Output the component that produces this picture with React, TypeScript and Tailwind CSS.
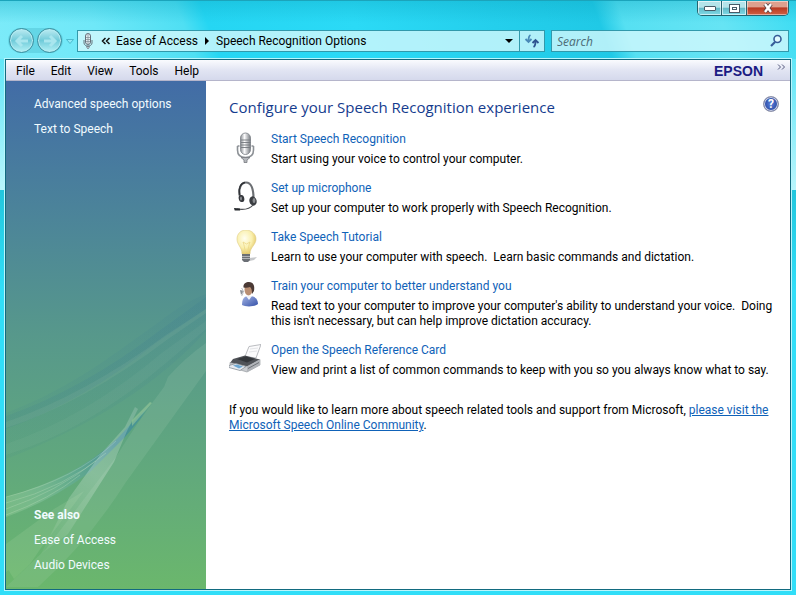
import type { ReactNode } from 'react';

function Microphone() {
  return (
    <svg viewBox="0 0 32 32" className="h-8 w-8" aria-hidden="true">
      <defs>
        <linearGradient id="mic" x1="0" x2="1">
          <stop offset="0" stopColor="#8b8f94" />
          <stop offset="0.4" stopColor="#fbfbfc" />
          <stop offset="1" stopColor="#767a80" />
        </linearGradient>
      </defs>
      <path d="M8.500 14h2M24.500 14h-2M8.500 14v4c0 5 3 7.500 8 7.500s8-2.500 8-7.500v-4" fill="none" stroke="#8d9196" strokeWidth="1.600" />
      <rect x="11.500" y="1" width="10" height="21.500" rx="5" fill="url(#mic)" stroke="#85898e" strokeWidth="0.900" />
      <path d="M12 8h9.500M12 10.500h9.500M12 13h9.500M12 15.500h9.500" stroke="#74787e" strokeWidth="0.900" />
      <path d="M12 25.500h9l-3 2.500v2.500h-3v-2.500z" fill="#b5b8bc" stroke="#777a80" strokeWidth="0.800" />
    </svg>
  );
}

function SmallMicrophone() {
  return (
    <svg viewBox="0 0 16 16" className="h-4 w-4" aria-hidden="true">
      <path d="M4 7v3c0 2 2 3 4 3s4-1 4-3V7" fill="none" stroke="#66767f" />
      <rect x="5.500" y="0.500" width="5" height="11" rx="2.500" fill="#e4eef2" stroke="#66707b" />
      <path d="M6 4.500h4M6 6.500h4M6 8.500h4M8 1v10" stroke="#7f8b94" strokeWidth="0.700" />
      <path d="M6.500 13.500h3L8.500 15.500h-1z" fill="#dfe9ee" stroke="#66707b" strokeWidth="0.800" />
    </svg>
  );
}

function Headset() {
  return (
    <svg viewBox="0 0 32 32" className="h-8 w-8" aria-hidden="true">
      <path d="M11.500 17C8.500 8 12 1.500 17 1.500c5.500 0 7.500 7 7.500 16" fill="none" stroke="#6d7074" strokeWidth="2.200" />
      <path d="M10.500 14C9 7 12 2 16 1.500" fill="none" stroke="#2f3236" strokeWidth="1.400" />
      <ellipse cx="12.500" cy="17.500" rx="2.800" ry="3.600" transform="rotate(-12 12.500 17.500)" fill="#34373c" />
      <ellipse cx="12" cy="17.500" rx="0.900" ry="2" fill="#8f9296" />
      <ellipse cx="24" cy="20" rx="3.600" ry="4.700" transform="rotate(-15 24 20)" fill="#3b3e42" />
      <ellipse cx="25" cy="19.500" rx="1.400" ry="2.600" fill="#8b8e92" />
      <path d="M24 24c-3 4-9 5-16 4" fill="none" stroke="#4b4e52" strokeWidth="1.200" />
      <path d="M5 27l6 .5.200 2-5.500 0z" fill="#25282c" />
    </svg>
  );
}

function Bulb() {
  return (
    <svg viewBox="0 0 32 32" className="h-8 w-8" aria-hidden="true">
      <defs>
        <radialGradient id="bulb" cx="0.400" cy="0.350" r="0.650">
          <stop offset="0" stopColor="#fffef0" />
          <stop offset="0.600" stopColor="#faf0ae" />
          <stop offset="1" stopColor="#e3c768" />
        </radialGradient>
      </defs>
      <path d="M20 28l8-1-3 3-9 2z" fill="#c5c7ca" />
      <path d="M17 0c-5.500 0-9 4-9 9 0 6 5 8 5 15h8c0-7 6-9 6-15 0-5-4.500-9-10-9z" fill="url(#bulb)" stroke="#dfcd86" strokeWidth="0.600" />
      <path d="M16 23c0-5-1-8-2-11l3.500 2 3.500-2c-1 3-2 6-2 11" fill="none" stroke="#ecd788" strokeWidth="0.800" />
      <path d="M13 24h8v6l-2 2h-4l-2-2z" fill="#6b6f75" />
      <path d="M13 26.500h8M13 28.500h8" stroke="#c1c4c8" strokeWidth="0.800" />
    </svg>
  );
}

function Speaker() {
  return (
    <svg viewBox="0 0 32 32" className="h-8 w-8" aria-hidden="true">
      <defs>
        <linearGradient id="shirt" x2="1" y2="1">
          <stop stopColor="#a5b5e4" />
          <stop offset="1" stopColor="#3350a8" />
        </linearGradient>
      </defs>
      <path d="M13 26c0-6 2-9 7-9 6 0 9 3 9 8-3 3-13 3-16 1z" fill="url(#shirt)" />
      <path d="M17 17l3 4 3-4z" fill="#f1f4fb" />
      <ellipse cx="19.500" cy="10.500" rx="4" ry="6" fill="#b98e72" />
      <path d="M14.500 8.500c-.5-4 2.500-5.500 5.500-5.500 4.500 0 6 4 5 9l-2 3c0-4-.5-6-2-7-2 .8-4 1-6.500.5z" fill="#4b3a35" />
      <path d="M11 11l4 1-3 4z" fill="#8b8f96" />
      <path d="M12.500 9c2 2 2 6 0 8" fill="none" stroke="#b5b8bd" strokeWidth="1" />
    </svg>
  );
}

function Printer() {
  return (
    <svg viewBox="0 0 32 32" className="h-8 w-8" aria-hidden="true">
      <path d="M16 13.500l4-10 12-2-5 13.500z" fill="#fbfbfc" stroke="#a8abb0" strokeWidth="0.800" />
      <path d="M21 6l8-1M20 9l8-1" stroke="#d8dade" strokeWidth="0.700" />
      <path d="M4 16l12-3.500 15 4-12 7-18-3.500z" fill="#505358" />
      <path d="M8 16l9-2.500 9 2.500-8 3.500z" fill="#34373b" />
      <path d="M1 19.500l17 4 13-7v5.500l-13 7-17-5z" fill="#c9ccd0" stroke="#8c9095" strokeWidth="0.600" />
      <path d="M18 23.500l13-7v5.500l-13 7z" fill="#b1b4b9" />
      <path d="M19 25.500l11-6" stroke="#6e7277" strokeWidth="1" />
      <path d="M0 22.500l7-2 10 3-6 4-11-3z" fill="#e6ebf1" stroke="#81868c" strokeWidth="0.700" />
      <path d="M4 22.500l4-1 6 2-4 2z" fill="#6fa8d2" />
    </svg>
  );
}

function Task({ icon, title, children }: { icon: ReactNode; title: string; children: ReactNode }) {
  return (
    <li className="flex items-start gap-[10px]">
      <span className="shrink-0">{icon}</span>
      <div className="flex flex-col items-start gap-[5px]">
        <a href="#task" className="text-[#0f62b8]">{title}</a>
        <p>{children}</p>
      </div>
    </li>
  );
}

function SidebarArt() {
  return (
    <svg viewBox="0 0 200 300" preserveAspectRatio="none" className="absolute bottom-0 left-0 h-[300px] w-full" aria-hidden="true">
      <defs>
        <linearGradient id="blade" gradientUnits="userSpaceOnUse" x1="0" y1="215" x2="146" y2="114">
          <stop offset="0" stopColor="#a5d8a8" stopOpacity="0.300" />
          <stop offset="0.350" stopColor="#68af95" stopOpacity="0.700" />
          <stop offset="0.700" stopColor="#458f96" />
          <stop offset="0.900" stopColor="#4a9693" />
          <stop offset="1" stopColor="#6bae8e" stopOpacity="0.400" />
        </linearGradient>
        <linearGradient id="band" x1="0" y1="1" x2="1" y2="0">
          <stop offset="0" stopColor="#3f7e91" stopOpacity="0.140" />
          <stop offset="1" stopColor="#3f7e91" stopOpacity="0.240" />
        </linearGradient>
        <linearGradient id="ray" gradientUnits="userSpaceOnUse" x1="35" y1="265" x2="130" y2="118">
          <stop offset="0" stopColor="#fff" stopOpacity="0.040" />
          <stop offset="0.550" stopColor="#fff" stopOpacity="0.240" />
          <stop offset="1" stopColor="#fff" stopOpacity="0.160" />
        </linearGradient>
      </defs>
      <path d="M0 124C70 97 110 63 153 33Q180 12 200 5V42Q130 120 0 170z" fill="url(#band)" opacity="0.600" />
      <path d="M0 127Q77 100 153 42L200 8V20L150 54Q80 111 0 140z" fill="url(#band)" />
      <path d="M0 133Q80 105 160 46L200 20V24L162 50Q78 114 0 139z" fill="#a2c9b0" opacity="0.120" />
      <path d="M0 155Q80 128 157 63L200 32v8L160 74Q80 142 0 166z" fill="#a2c9b0" opacity="0.080" />
      <path d="M200 54Q180 68 162 88L158 98Q130 135 110 168L40 260 0 298H32Q82 253 120 193L200 82z" fill="#b4d4bb" opacity="0.150" />
      <path d="M0 208Q84 184 122 138L145 114Q140 124 119 148L84 183Q45 212 0 228z" fill="url(#blade)" />
      <path d="M0 208Q70 190 110 152M0 214Q60 198 100 164M0 220Q50 203 90 172M0 226Q44 210 74 186" fill="none" stroke="#d3eacc" strokeOpacity="0.250" strokeWidth="1" />
      <path d="M129 118l3 2-11 22-3 7-10 24-46 72-27 20 28-56 31-43 25-28z" fill="url(#ray)" />
      <path d="M126 131l18-18 2 1-20 23z" fill="#a6d19e" opacity="0.500" />
      <path d="M0 255L48 220 78 202 42 250 0 283zM0 277l48-37-24 35-16 15z" fill="#d5edc2" opacity="0.120" />
    </svg>
  );
}

const caption = 'flex h-[14px] items-center justify-center border-r border-[#25636f] shadow-[inset_0_0_0_1px_#ffffff99]';
const glass = 'bg-linear-to-b from-[#b4e4ea] from-45% via-[#62b9c6] via-50% to-[#7fdbe8]';
const round = 'flex h-[25px] w-[25px] items-center justify-center rounded-full border border-[#3a8e9e] bg-linear-to-b from-[#bcebf2] via-[#6fcbd9] to-[#b4f2f7] text-[#a9e6ee] shadow-[inset_0_0_0_1px_#b5ecf2]';

export default function App() {
  return (
    <div className="flex min-h-screen flex-col bg-[linear-gradient(180deg,#62e6f7_0,#62e6f7_60px,#b9f5fc_190px,#22c6dd_190px,#31def8_290px,#31def8_100%)] px-[5px] pb-[5px] font-[Roboto,'Open_Sans',sans-serif] text-[12px] leading-[15px] text-black">
      <header className="-mx-[5px] border-t border-[#1ba4bb] bg-[linear-gradient(180deg,#0aa5c055_0,#0aa5c000_22px),linear-gradient(70deg,#7cebf9_0%,#6fe8f8_13%,#4fdff3_24%,#25d6f3_27%,#2bdaf6_45%,#24cfec_62%,#20c9e6_75%,#56e0f2_78%,#66e4f4_90%,#3bdcf3_100%)] px-[5px]">
        <div className="flex h-[29px] items-start justify-end pr-[2px]">
          <div className="flex overflow-hidden rounded-b-[5px] border border-t-0 border-[#25636f]">
            <button aria-label="Minimize" className={`${caption} ${glass} w-[24px]`}>
              <span className="h-[5px] w-3 rounded-[1px] border border-[#485b67] bg-white" />
            </button>
            <button aria-label="Maximize" className={`${caption} ${glass} w-[25px]`}>
              <span className="flex h-[9px] w-[11px] items-center justify-center border border-[#485b67] bg-white">
                <span className="h-[3px] w-[5px] border border-[#485b67]" />
              </span>
            </button>
            <button aria-label="Close" className="flex h-[14px] w-[41px] items-center justify-center bg-linear-to-b from-[#dda08e] from-40% via-[#b83a22] via-50% to-[#cf6044] shadow-[inset_0_0_0_1px_#ffffff77]">
              <svg viewBox="0 0 12 10" className="h-[10px] w-3" aria-hidden="true">
                <path d="M3 1l6 8M9 1L3 9" stroke="#5b4548" strokeWidth="4" />
                <path d="M3 1l6 8M9 1L3 9" stroke="#fff" strokeWidth="2.400" />
              </svg>
            </button>
          </div>
        </div>
        <nav aria-label="Navigation" className="flex h-[29px] items-start pr-[2px] pl-[3px]">
          <div className="-mt-[2px] flex items-center gap-[3px] rounded-full bg-[#49b8ca66] px-px">
            <button aria-label="Back" className={round}>
              <svg viewBox="0 0 16 16" className="h-4 w-4" aria-hidden="true"><path d="M14 8H3M8 3L3 8l5 5" fill="none" stroke="currentColor" strokeWidth="3" /></svg>
            </button>
            <button aria-label="Forward" className={round}>
              <svg viewBox="0 0 16 16" className="h-4 w-4" aria-hidden="true"><path d="M2 8h11M8 3l5 5-5 5" fill="none" stroke="currentColor" strokeWidth="3" /></svg>
            </button>
          </div>
          <button aria-label="Recent pages" className="flex h-[22px] w-[14px] items-center justify-center">
            <svg viewBox="0 0 8 5" className="h-[5px] w-2" aria-hidden="true"><path d="M0.500 0.500h7L4 4.500z" fill="#8eeaf7" stroke="#3fb0c3" strokeWidth="0.800" /></svg>
          </button>
          <div className="flex h-[22px] min-w-0 flex-1 border border-[#3199ab] bg-[#d5f9fdcc]">
            <div className="flex flex-1 items-center pl-[2px]">
              <SmallMicrophone />
              <button aria-label="Show path" className="ml-[5px] flex">
                <svg viewBox="0 0 10 8" className="h-2 w-[10px]" aria-hidden="true"><path d="M4.500 1l-3 3 3 3M8.500 1l-3 3 3 3" fill="none" stroke="#111" strokeWidth="1.500" /></svg>
              </button>
              <button className="ml-[5px]">Ease of Access</button>
              <svg viewBox="0 0 4 8" className="mx-[7px] h-2 w-1" aria-hidden="true"><path d="M0 0L4 4 0 8z" /></svg>
              <button>Speech Recognition Options</button>
            </div>
            <button aria-label="Previous locations" className="flex w-5 items-center justify-center">
              <svg viewBox="0 0 8 4" className="h-1 w-2" aria-hidden="true"><path d="M0 0h8L4 4z" /></svg>
            </button>
            <button aria-label="Refresh" className="flex w-[25px] items-center justify-center border-l border-[#3199ab]">
              <svg viewBox="0 0 16 14" className="h-[14px] w-4" aria-hidden="true">
                <path d="M6.500 1C4.500 2 4.500 4 4.500 7M1.500 5l3 3 3-3" fill="none" stroke="#4a8ab8" strokeWidth="1.800" />
                <path d="M9.500 13c2-1 2-3 2-6M8.500 9l3-3 3 3" fill="none" stroke="#2f5590" strokeWidth="1.800" />
              </svg>
            </button>
          </div>
          <label className="ml-[6px] flex h-[22px] w-[238px] items-center border border-[#3199ab] bg-[#d5f9fdcc] px-[5px]">
            <input aria-label="Search" placeholder="Search" className="min-w-0 flex-1 bg-transparent font-['Open_Sans',sans-serif] italic outline-none placeholder:text-[#4d6b76]" />
            <svg viewBox="0 0 14 14" className="h-[14px] w-[14px]" aria-hidden="true">
              <circle cx="8.500" cy="5" r="3.500" fill="#e1fbff" stroke="#365d98" strokeWidth="1.600" />
              <path d="M6 8l-4 4" stroke="#365d98" strokeWidth="2.200" />
            </svg>
          </label>
        </nav>
      </header>

      <div className="flex flex-1 flex-col border border-[#126b80] shadow-[0_0_0_1px_#b9f6fd]">
        <div className="flex h-[21px] items-center border-b border-[#b5b5cb] bg-linear-to-b from-[#fafbfe] via-[#e2e5f3] to-[#d5d9ec] pt-[2px] pr-1 pl-[10px]">
          <div className="flex flex-1 gap-4">
            <button>File</button>
            <button>Edit</button>
            <button>View</button>
            <button>Tools</button>
            <button>Help</button>
          </div>
          <button className="font-['Liberation_Sans',Arial,sans-serif] text-[14px] font-bold text-[#1b1b83]">EPSON</button>
          <button aria-label="More toolbar items" className="mb-2 ml-[14px]">
            <svg viewBox="0 0 9 6" className="h-[6px] w-[9px]" aria-hidden="true"><path d="M1 0.500L3.500 3 1 5.500M5 0.500L7.500 3 5 5.500" fill="none" stroke="#55597d" /></svg>
          </button>
        </div>

        <div className="flex flex-1">
          <aside className="relative flex w-[200px] shrink-0 flex-col bg-linear-to-b from-[#426ca6] via-[#57988b] to-[#6bb76c]">
            <SidebarArt />
            <div className="relative flex flex-1 flex-col justify-between px-7 py-4 text-[#f1fbff]">
              <nav aria-label="Tasks" className="flex flex-col items-start gap-[10px]">
                <a href="#advanced">Advanced speech options</a>
                <a href="#tts">Text to Speech</a>
              </nav>
              <nav aria-label="See also" className="flex flex-col items-start gap-[10px]">
                <h2 className="font-bold">See also</h2>
                <a href="#ease">Ease of Access</a>
                <a href="#audio">Audio Devices</a>
              </nav>
            </div>
          </aside>

          <main className="min-w-0 flex-1 bg-white pt-[15px] pr-[11px] pl-[23px]">
            <div className="flex items-start justify-between">
              <h1 className="font-['Open_Sans',sans-serif] text-[15px] leading-[22px] text-[#153c8e]">Configure your Speech Recognition experience</h1>
              <button aria-label="Help" className="flex h-4 w-4 items-center justify-center rounded-full border border-[#8d91a8] bg-radial from-[#5c83dc] to-[#182f8b] text-[12px] leading-3 font-bold text-white shadow-[inset_0_0_0_1px_#d0d5e6]">?</button>
            </div>
            <ul className="mt-[14px] flex flex-col gap-[14px]">
              <Task icon={<Microphone />} title="Start Speech Recognition">Start using your voice to control your computer.</Task>
              <Task icon={<Headset />} title="Set up microphone">Set up your computer to work properly with Speech Recognition.</Task>
              <Task icon={<Bulb />} title="Take Speech Tutorial">Learn to use your computer with speech.&nbsp; Learn basic commands and dictation.</Task>
              <Task icon={<Speaker />} title="Train your computer to better understand you">Read text to your computer to improve your computer's ability to understand your voice.&nbsp; Doing this isn't necessary, but can help improve dictation accuracy.</Task>
              <Task icon={<Printer />} title="Open the Speech Reference Card">View and print a list of common commands to keep with you so you always know what to say.</Task>
            </ul>
            <p className="mt-[25px]">
              If you would like to learn more about speech related tools and support from Microsoft,{' '}
              <a href="#community" className="text-[#0f62b8] underline">please visit the Microsoft Speech Online Community</a>.
            </p>
          </main>
        </div>
      </div>
    </div>
  );
}
